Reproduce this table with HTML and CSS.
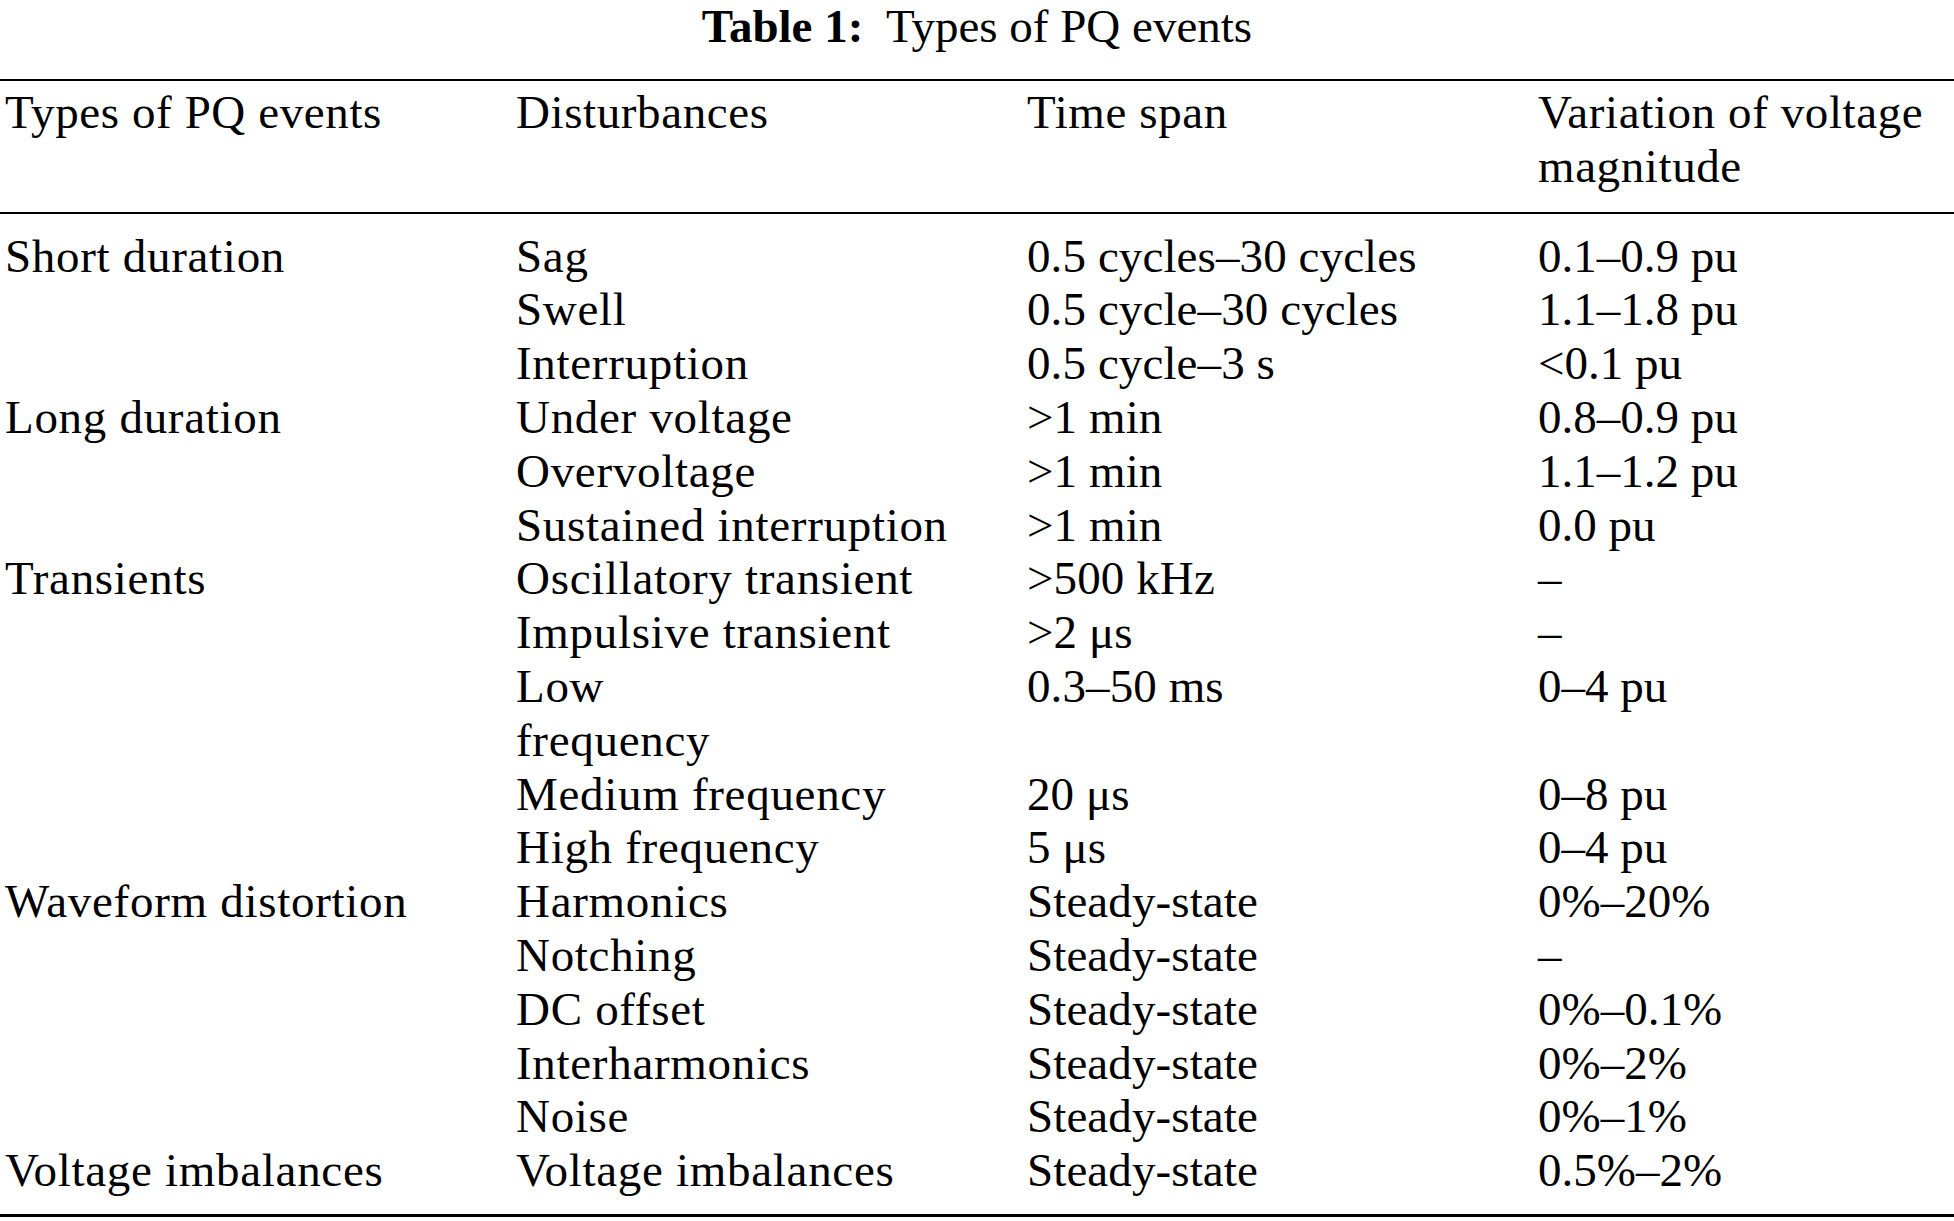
FILE: index.html
```html
<!DOCTYPE html>
<html lang="en">
<head>
<meta charset="utf-8">
<title>Table 1: Types of PQ events</title>
<link rel="stylesheet" href="styles.css">
</head>
<body>
<div class="caption"><b>Table 1:</b>&nbsp; Types of PQ events</div>
<table class="pq">
  <colgroup>
    <col class="c1"><col class="c2"><col class="c3"><col class="c4">
  </colgroup>
  <thead>
    <tr>
      <th>Types of PQ events</th>
      <th>Disturbances</th>
      <th>Time span</th>
      <th>Variation of voltage<br>magnitude</th>
    </tr>
  </thead>
  <tbody>
    <tr class="first"><td>Short duration</td><td>Sag</td><td>0.5 cycles–30 cycles</td><td>0.1–0.9 pu</td></tr>
    <tr><td></td><td>Swell</td><td>0.5 cycle–30 cycles</td><td>1.1–1.8 pu</td></tr>
    <tr><td></td><td>Interruption</td><td>0.5 cycle–3 s</td><td>&lt;0.1 pu</td></tr>
    <tr><td>Long duration</td><td>Under voltage</td><td>&gt;1 min</td><td>0.8–0.9 pu</td></tr>
    <tr><td></td><td>Overvoltage</td><td>&gt;1 min</td><td>1.1–1.2 pu</td></tr>
    <tr><td></td><td>Sustained interruption</td><td>&gt;1 min</td><td>0.0 pu</td></tr>
    <tr><td>Transients</td><td>Oscillatory transient</td><td>&gt;500 kHz</td><td>–</td></tr>
    <tr><td></td><td>Impulsive transient</td><td>&gt;2 μs</td><td>–</td></tr>
    <tr><td></td><td>Low</td><td>0.3–50 ms</td><td>0–4 pu</td></tr>
    <tr><td></td><td>frequency</td><td></td><td></td></tr>
    <tr><td></td><td>Medium frequency</td><td>20 μs</td><td>0–8 pu</td></tr>
    <tr><td></td><td>High frequency</td><td>5 μs</td><td>0–4 pu</td></tr>
    <tr><td>Waveform distortion</td><td>Harmonics</td><td>Steady-state</td><td>0%–20%</td></tr>
    <tr><td></td><td>Notching</td><td>Steady-state</td><td>–</td></tr>
    <tr><td></td><td>DC offset</td><td>Steady-state</td><td>0%–0.1%</td></tr>
    <tr><td></td><td>Interharmonics</td><td>Steady-state</td><td>0%–2%</td></tr>
    <tr><td></td><td>Noise</td><td>Steady-state</td><td>0%–1%</td></tr>
    <tr class="last"><td>Voltage imbalances</td><td>Voltage imbalances</td><td>Steady-state</td><td>0.5%–2%</td></tr>
  </tbody>
</table>
</body>
</html>
```
FILE: styles.css
```css
html, body {
  margin: 0;
  padding: 0;
  background: #ffffff;
  color: #000000;
}

body {
  font-family: "Liberation Serif", "Times New Roman", serif;
  font-size: 47px;
}

.caption {
  text-align: center;
  line-height: 52px;
  margin: 0 0 27px 0;
  white-space: nowrap;
}

.caption b {
  font-weight: bold;
}

.pq {
  width: 100%;
  border-collapse: collapse;
  table-layout: fixed;
  border-top: 2px solid #000;
  border-bottom: 3px solid #000;
}

.c1, .c2, .c3 { width: 511px; }
.c4 { width: auto; }

.pq th {
  font-weight: normal;
  text-align: left;
  vertical-align: top;
  line-height: 53.8px;
  padding: 5px 0 18px 5px;
  letter-spacing: 0.6px;
  white-space: nowrap;
}

.pq thead tr {
  border-bottom: 2px solid #000;
}

.pq td {
  text-align: left;
  vertical-align: top;
  line-height: 53.8px;
  height: 53.8px;
  padding: 0 0 0 5px;
  white-space: nowrap;
}

.pq td:nth-child(1),
.pq td:nth-child(2) {
  letter-spacing: 0.7px;
}

.pq td:nth-child(3) {
  letter-spacing: 0.1px;
}

.pq tr.first td { padding-top: 16px; }
.pq tr.last td { padding-bottom: 16px; }
```
